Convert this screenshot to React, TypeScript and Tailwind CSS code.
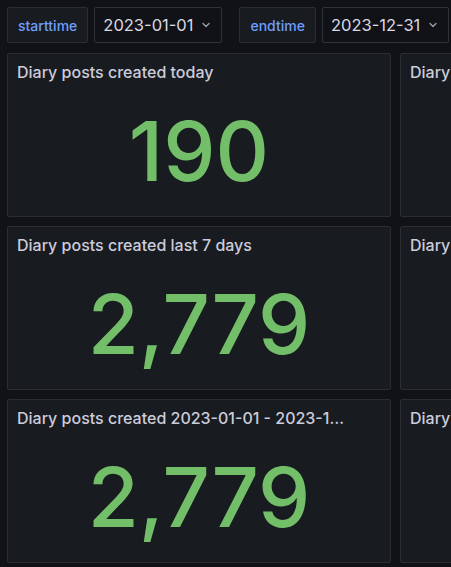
import { ChevronDown } from 'lucide-react'

const panels = [
  { title: 'Diary posts created today', value: '190' },
  { title: 'Diary posts created last 7 days', value: '2,779' },
  { title: 'Diary posts created 2023-01-01 - 2023-12-31', value: '2,779' },
]

function VarPicker({ label, value }: { label: string; value: string }) {
  return (
    <div className="flex items-center gap-[6px]">
      <div className="h-[36px] flex items-center px-[10px] bg-[#181b1f] border border-[#2a2d32] rounded-[2px] text-[14px] font-medium text-[#6e9fff]">
        {label}
      </div>
      <div className="h-[36px] flex items-center gap-[7px] pl-[8px] pr-[9px] bg-[#111217] border border-[#2f3237] rounded-[2px] text-[16.5px] text-[#d8d9e0]">
        {value}
        <ChevronDown className="w-[12px] h-[12px] text-[#a0a2ab]" strokeWidth={2.5} />
      </div>
    </div>
  )
}

function StatPanel({ title, value }: { title: string; value: string }) {
  return (
    <div className="h-[164px] bg-[#181b1f] border border-[#2a2d32] rounded-[2px] flex flex-col overflow-hidden">
      <div className="h-[32px] shrink-0 pl-[9px] pr-[42px] pt-[6px] text-[16px] font-medium text-[#ccccdc] truncate">
        {title}
      </div>
      <div className="flex-1 flex items-center justify-center text-[83px] leading-none font-medium text-[#73bf69]">
        {value}
      </div>
    </div>
  )
}

export default function App() {
  return (
    <div className="w-[451px] h-[567px] overflow-hidden bg-[#111217] pl-[7px] pt-[7px] font-['Inter',sans-serif]">
      <div className="flex gap-[17px] whitespace-nowrap">
        <VarPicker label="starttime" value="2023-01-01" />
        <VarPicker label="endtime" value="2023-12-31" />
      </div>

      <div className="mt-[10px] grid grid-cols-[384px_384px] gap-[9px]">
        {panels.map((p) => (
          <>
            <StatPanel key={p.title} title={p.title} value={p.value} />
            <StatPanel key={p.title + '-2'} title="Diary posts" value="" />
          </>
        ))}
      </div>
    </div>
  )
}
